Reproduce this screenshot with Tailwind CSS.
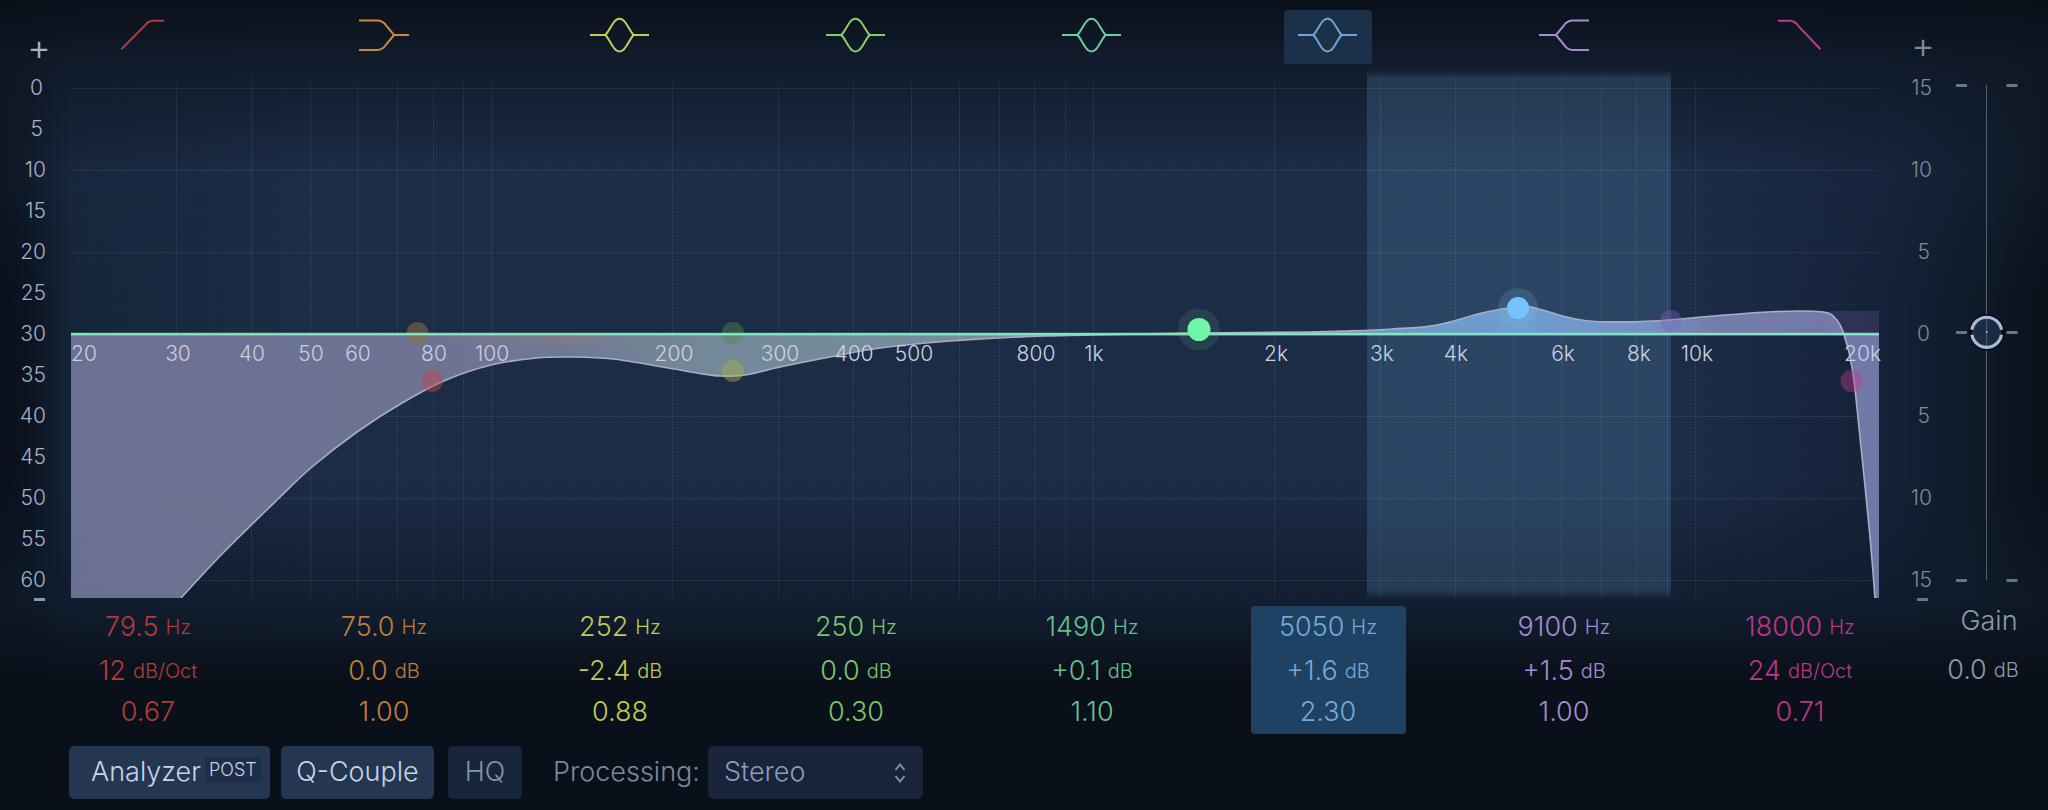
<!DOCTYPE html>
<html lang="en">
<head>
  <meta charset="UTF-8" />
  <title>Channel EQ</title>
  <script src="https://cdn.jsdelivr.net/npm/@tailwindcss/browser@4"></script>
</head>
<body class="bg-[#0a1019]">
  <div class="relative w-[2048px] h-[810px] overflow-hidden font-['Inter',sans-serif] bg-[linear-gradient(180deg,#0a1019f8_0,#0f1827d8_60px,#1c2d4740_170px,#1c2d4700_300px,#1c2d4700_480px,#0f1a2ab8_600px,#0a1019_680px),linear-gradient(90deg,#0a1019_0,#0c1421_30px,#16263c_75px,#1c2d47_300px,#1c2d47_1700px,#15233a_1880px,#0e1826_1990px,#0a1019_2048px)]">

    <!-- band type icons -->
    <div class="relative h-[67px]">
      <span class="absolute left-[19px] top-[25px] w-[40px] text-center text-[36px] leading-[44px] font-light text-[#a3b2c8]">+</span>
      <span class="absolute left-[1903px] top-[23px] w-[40px] text-center text-[36px] leading-[44px] font-light text-[#7f8b9b]">+</span>
      <div class="ml-[30px] w-[1888px] grid grid-cols-8">
        <div class="h-[67px] flex justify-center pt-[15px]">
          <svg class="w-[64px] h-[40px]" viewBox="0 0 64 40" fill="none" stroke="#b03c3e" stroke-width="2"><path d="M5.4 34.3 L27.8 11.7 Q32 5.7 37 5.7 H48" /></svg>
        </div>
        <div class="h-[67px] flex justify-center pt-[15px]">
          <svg class="w-[64px] h-[40px]" viewBox="0 0 64 40" fill="none" stroke="#c98a3c" stroke-width="2"><path d="M7 5.5 H25 Q31 5.5 34.5 11 L42 20 H57 M42 20 L34.5 29 Q31 35 25 35 H7" /></svg>
        </div>
        <div class="h-[67px] flex justify-center pt-[15px]">
          <svg class="w-[64px] h-[40px]" viewBox="0 0 64 40" fill="none" stroke="#c5cf56" stroke-width="2"><path d="M2 20 H17.5 C21 16 23 11 26 7 C29 2.5 34 2.5 37 7 C40 11 42 16 45.5 20 H61 M45.5 20 C42 24 40 29 37 33 C34 37.5 29 37.5 26 33 C23 29 21 24 17.5 20" /></svg>
        </div>
        <div class="h-[67px] flex justify-center pt-[15px]">
          <svg class="w-[64px] h-[40px]" viewBox="0 0 64 40" fill="none" stroke="#86cf68" stroke-width="2"><path d="M2 20 H17.5 C21 16 23 11 26 7 C29 2.5 34 2.5 37 7 C40 11 42 16 45.5 20 H61 M45.5 20 C42 24 40 29 37 33 C34 37.5 29 37.5 26 33 C23 29 21 24 17.5 20" /></svg>
        </div>
        <div class="h-[67px] flex justify-center pt-[15px]">
          <svg class="w-[64px] h-[40px]" viewBox="0 0 64 40" fill="none" stroke="#68cf9e" stroke-width="2"><path d="M2 20 H17.5 C21 16 23 11 26 7 C29 2.5 34 2.5 37 7 C40 11 42 16 45.5 20 H61 M45.5 20 C42 24 40 29 37 33 C34 37.5 29 37.5 26 33 C23 29 21 24 17.5 20" /></svg>
        </div>
        <div class="h-[67px] flex justify-center pt-[10px]">
          <div class="w-[88px] h-[54px] rounded-[4px] bg-[#1b3049] flex justify-center pt-[5px]">
            <svg class="w-[64px] h-[40px]" viewBox="0 0 64 40" fill="none" stroke="#6fa5da" stroke-width="2"><path d="M2 20 H17.5 C21 16 23 11 26 7 C29 2.5 34 2.5 37 7 C40 11 42 16 45.5 20 H61 M45.5 20 C42 24 40 29 37 33 C34 37.5 29 37.5 26 33 C23 29 21 24 17.5 20" /></svg>
          </div>
        </div>
        <div class="h-[67px] flex justify-center pt-[15px]">
          <svg class="w-[64px] h-[40px]" viewBox="0 0 64 40" fill="none" stroke="#a78dd6" stroke-width="2"><path d="M7 20 H24 L31.5 11 Q35 5.5 41 5.5 H57 M24 20 L31.5 29 Q35 35 41 35 H57" /></svg>
        </div>
        <div class="h-[67px] flex justify-center pt-[15px]">
          <svg class="w-[64px] h-[40px]" viewBox="0 0 64 40" fill="none" stroke="#c23a8c" stroke-width="2"><path d="M10 5.7 H22 Q27 5.7 31 11.7 L52.4 34.3" /></svg>
        </div>
      </div>
    </div>

    <!-- graph row -->
    <div class="flex h-[531px]">
      <!-- analyzer scale -->
      <div class="relative w-[71px] shrink-0 flex flex-col pr-[25px] text-[21px] font-light text-[#a3b2c7] text-right">
        <div class="h-[41px] shrink-0 flex items-center justify-end pr-[3px]">0</div>
        <div class="h-[41px] shrink-0 flex items-center justify-end pr-[3px]">5</div>
        <div class="h-[41px] shrink-0 flex items-center justify-end">10</div>
        <div class="h-[41px] shrink-0 flex items-center justify-end">15</div>
        <div class="h-[41px] shrink-0 flex items-center justify-end">20</div>
        <div class="h-[41px] shrink-0 flex items-center justify-end">25</div>
        <div class="h-[41px] shrink-0 flex items-center justify-end">30</div>
        <div class="h-[41px] shrink-0 flex items-center justify-end">35</div>
        <div class="h-[41px] shrink-0 flex items-center justify-end">40</div>
        <div class="h-[41px] shrink-0 flex items-center justify-end">45</div>
        <div class="h-[41px] shrink-0 flex items-center justify-end">50</div>
        <div class="h-[41px] shrink-0 flex items-center justify-end">55</div>
        <div class="h-[41px] shrink-0 flex items-center justify-end">60</div>
        <span class="absolute left-[34px] top-[531px] w-[11px] h-[3px] bg-[#8a98ac]"></span>
      </div>

      <!-- curve display -->
      <div class="relative w-[1808px] shrink-0">
        <svg class="absolute inset-0 w-[1808px] h-[531px]" viewBox="71 67 1808 531" fill="none">
          <defs>
            <pattern id="dots" width="3" height="3" patternUnits="userSpaceOnUse"><rect width="1" height="1" fill="#000" fill-opacity=".18" /></pattern>
            <linearGradient id="vfade" gradientUnits="userSpaceOnUse" x1="0" y1="70" x2="0" y2="598">
              <stop offset="0" stop-color="#fff" stop-opacity="0" />
              <stop offset=".05" stop-color="#fff" stop-opacity=".07" />
              <stop offset="1" stop-color="#fff" stop-opacity=".06" />
            </linearGradient>
            <linearGradient id="band" gradientUnits="userSpaceOnUse" x1="0" y1="70" x2="0" y2="600">
              <stop offset="0" stop-color="#6ba6dc" stop-opacity="0" />
              <stop offset=".015" stop-color="#6ba6dc" stop-opacity=".2" />
              <stop offset=".98" stop-color="#6ba6dc" stop-opacity=".2" />
              <stop offset="1" stop-color="#6ba6dc" stop-opacity="0" />
            </linearGradient>
            <linearGradient id="fill" gradientUnits="userSpaceOnUse" x1="71" y1="0" x2="1879" y2="0">
              <stop offset="0" stop-color="#73779a" />
              <stop offset=".205" stop-color="#75789a" />
              <stop offset=".27" stop-color="#77809a" />
              <stop offset=".35" stop-color="#7b909f" />
              <stop offset=".49" stop-color="#7c95a5" />
              <stop offset=".68" stop-color="#7a9bbd" />
              <stop offset=".735" stop-color="#72a0d0" />
              <stop offset=".8" stop-color="#73a6dc" />
              <stop offset=".875" stop-color="#7b97c8" />
              <stop offset=".91" stop-color="#7b83b0" />
              <stop offset="1" stop-color="#7a7fb0" />
            </linearGradient>
            <linearGradient id="zero" gradientUnits="userSpaceOnUse" x1="71" y1="0" x2="1879" y2="0">
              <stop offset="0" stop-color="#7fe6b2" />
              <stop offset=".6" stop-color="#7fe6b8" />
              <stop offset="1" stop-color="#88e2cb" />
            </linearGradient>
            <filter id="soft"><feGaussianBlur stdDeviation="3" /></filter>
            <clipPath id="under"><path id="clipShape" /></clipPath>
          </defs>

          <rect x="71" y="67" width="1808" height="531" fill="url(#dots)" />
          <rect x="1367" y="70" width="304" height="530" fill="url(#band)" />
          <path stroke="url(#vfade)" d="M176.5 70V598M251.5 70V598M310.5 70V598M357.5 70V598M397.5 70V598M433.5 70V598M463.5 70V598M491.5 70V598M672.5 70V598M778.5 70V598M853.5 70V598M911.5 70V598M959.5 70V598M999.5 70V598M1034.5 70V598M1065.5 70V598M1093.5 70V598M1274.5 70V598M1380.5 70V598M1455.5 70V598M1513.5 70V598M1561.5 70V598M1601.5 70V598M1636.5 70V598M1667.5 70V598M1695.5 70V598" />
          <path stroke="#fff" stroke-opacity=".07" d="M71 88.5H1878M71 170.5H1878M71 252.5H1878M71 416.5H1878M71 498.5H1878M71 580.5H1878" />

          <rect x="1830" y="311" width="49" height="23" fill="#4a4270" fill-opacity=".5" />
          <path id="curveFill" fill="url(#fill)" fill-opacity=".92" />
          <g clip-path="url(#under)">
            <path d="M470 376 Q560 340 660 370 L650 380 L470 380Z" fill="#5878ad" fill-opacity=".75" filter="url(#soft)" />
            <path d="M440 334 H640 L570 344 Q500 340 440 336Z" fill="#9a7a7a" fill-opacity=".4" filter="url(#soft)" />
          </g>
          <path id="curveLine" stroke="#a9aec6" stroke-width="1.6" />

          <circle cx="417.5" cy="333" r="11" fill="#8a7040" fill-opacity=".55" />
          <circle cx="432" cy="381" r="11" fill="#c0484d" fill-opacity=".45" />
          <circle cx="733" cy="371" r="11" fill="#a8b04a" fill-opacity=".45" />
          <circle cx="733" cy="333" r="11" fill="#4f8a50" fill-opacity=".45" />
          <circle cx="1671" cy="321" r="11" fill="#8060b8" fill-opacity=".38" />
          <circle cx="1851.5" cy="381" r="11" fill="#c03a90" fill-opacity=".42" />

          <rect x="71" y="332.8" width="1808" height="2.6" fill="url(#zero)" />

          <circle cx="1199" cy="329.5" r="21" fill="#7ad8b0" fill-opacity=".12" />
          <circle cx="1199" cy="329.5" r="11.5" fill="#6ef5a8" />
          <circle cx="1518" cy="308" r="20" fill="#79bfe8" fill-opacity=".18" />
          <circle cx="1518" cy="308" r="11" fill="#75c4ff" />
        </svg>

        <span class="absolute top-[275px] left-0 text-[21px] font-light leading-[24px] text-[#c9cede]">20</span>
        <span class="absolute top-[275px] left-[107px] -translate-x-1/2 text-[21px] font-light leading-[24px] text-[#c9cede]">30</span>
        <span class="absolute top-[275px] left-[181px] -translate-x-1/2 text-[21px] font-light leading-[24px] text-[#c9cede]">40</span>
        <span class="absolute top-[275px] left-[240px] -translate-x-1/2 text-[21px] font-light leading-[24px] text-[#c9cede]">50</span>
        <span class="absolute top-[275px] left-[287px] -translate-x-1/2 text-[21px] font-light leading-[24px] text-[#c9cede]">60</span>
        <span class="absolute top-[275px] left-[363px] -translate-x-1/2 text-[21px] font-light leading-[24px] text-[#c9cede]">80</span>
        <span class="absolute top-[275px] left-[421px] -translate-x-1/2 text-[21px] font-light leading-[24px] text-[#c9cede]">100</span>
        <span class="absolute top-[275px] left-[603px] -translate-x-1/2 text-[21px] font-light leading-[24px] text-[#c9d3e0]">200</span>
        <span class="absolute top-[275px] left-[709px] -translate-x-1/2 text-[21px] font-light leading-[24px] text-[#c9d3e0]">300</span>
        <span class="absolute top-[275px] left-[783px] -translate-x-1/2 text-[21px] font-light leading-[24px] text-[#c9d3e0]">400</span>
        <span class="absolute top-[275px] left-[843px] -translate-x-1/2 text-[21px] font-light leading-[24px] text-[#c9d3e0]">500</span>
        <span class="absolute top-[275px] left-[965px] -translate-x-1/2 text-[21px] font-light leading-[24px] text-[#c9d3e0]">800</span>
        <span class="absolute top-[275px] left-[1023px] -translate-x-1/2 text-[21px] font-light leading-[24px] text-[#c9d3e0]">1k</span>
        <span class="absolute top-[275px] left-[1205px] -translate-x-1/2 text-[21px] font-light leading-[24px] text-[#c9d3e0]">2k</span>
        <span class="absolute top-[275px] left-[1311px] -translate-x-1/2 text-[21px] font-light leading-[24px] text-[#c9d3e0]">3k</span>
        <span class="absolute top-[275px] left-[1385px] -translate-x-1/2 text-[21px] font-light leading-[24px] text-[#c9d3e0]">4k</span>
        <span class="absolute top-[275px] left-[1492px] -translate-x-1/2 text-[21px] font-light leading-[24px] text-[#c9d3e0]">6k</span>
        <span class="absolute top-[275px] left-[1568px] -translate-x-1/2 text-[21px] font-light leading-[24px] text-[#c9d3e0]">8k</span>
        <span class="absolute top-[275px] left-[1626px] -translate-x-1/2 text-[21px] font-light leading-[24px] text-[#c9d3e0]">10k</span>
        <span class="absolute top-[275px] right-[-2px] text-[21px] font-light leading-[24px] text-[#c9cede]">20k</span>
      </div>

      <!-- gain scale -->
      <div class="relative w-[55px] shrink-0 flex flex-col pr-[2px] text-[21px] font-light text-[#7e8a98] text-right">
        <div class="h-[41px] shrink-0 flex items-center justify-end">15</div>
        <div class="h-[41px] shrink-0"></div>
        <div class="h-[41px] shrink-0 flex items-center justify-end">10</div>
        <div class="h-[41px] shrink-0"></div>
        <div class="h-[41px] shrink-0 flex items-center justify-end pr-[2px]">5</div>
        <div class="h-[41px] shrink-0"></div>
        <div class="h-[41px] shrink-0 flex items-center justify-end pr-[2px]">0</div>
        <div class="h-[41px] shrink-0"></div>
        <div class="h-[41px] shrink-0 flex items-center justify-end pr-[2px]">5</div>
        <div class="h-[41px] shrink-0"></div>
        <div class="h-[41px] shrink-0 flex items-center justify-end">10</div>
        <div class="h-[41px] shrink-0"></div>
        <div class="h-[41px] shrink-0 flex items-center justify-end">15</div>
        <span class="absolute left-[38px] top-[531px] w-[11px] h-[3px] bg-[#6a7582]"></span>
      </div>

      <!-- gain slider -->
      <svg class="w-[114px] h-[531px] shrink-0" viewBox="1934 67 114 531" fill="none">
        <path d="M1986.5 85V580" stroke="#556170" />
        <path d="M1956 85.5H1967M2006.5 85.5H2017.5M1956 332.5H1967M2006.5 332.5H2017.5M1956 580.5H1967M2006.5 580.5H2017.5" stroke="#6a7582" stroke-width="3" />
        <circle cx="1986.7" cy="332.3" r="18" fill="#05090f" />
        <circle cx="1986.7" cy="332.3" r="15" fill="#1b2b42" />
        <path d="M1986.7 318V347" stroke="#556170" />
        <path d="M1971.9 329.8 A15 15 0 0 1 2001.5 329.8 M1971.9 334.8 A15 15 0 0 0 2001.5 334.8" stroke="#a3bbdc" stroke-width="3.2" />
        <rect x="1986" y="331.5" width="1.5" height="1.5" fill="#c4d4ea" />
      </svg>
    </div>

    <!-- band parameters -->
    <div class="flex h-[136px] pt-[8px]">
      <div class="ml-[30px] w-[1888px] grid grid-cols-8 text-[27px] font-light">
        <div class="flex justify-center text-[#b5393a]">
          <div class="w-[155px] h-[128px] flex flex-col items-center">
            <div class="h-[42px] flex items-center gap-[7px]"><span>79.5</span><span class="text-[20px]">Hz</span></div>
            <div class="h-[46px] flex items-center gap-[7px]"><span>12</span><span class="text-[20px]">dB/Oct</span></div>
            <div class="h-[36px] flex items-center"><span>0.67</span></div>
          </div>
        </div>
        <div class="flex justify-center text-[#bf7f36]">
          <div class="w-[155px] h-[128px] flex flex-col items-center">
            <div class="h-[42px] flex items-center gap-[7px]"><span>75.0</span><span class="text-[20px]">Hz</span></div>
            <div class="h-[46px] flex items-center gap-[7px]"><span>0.0</span><span class="text-[20px]">dB</span></div>
            <div class="h-[36px] flex items-center"><span>1.00</span></div>
          </div>
        </div>
        <div class="flex justify-center text-[#c0ca55]">
          <div class="w-[155px] h-[128px] flex flex-col items-center">
            <div class="h-[42px] flex items-center gap-[7px]"><span>252</span><span class="text-[20px]">Hz</span></div>
            <div class="h-[46px] flex items-center gap-[7px]"><span>-2.4</span><span class="text-[20px]">dB</span></div>
            <div class="h-[36px] flex items-center"><span>0.88</span></div>
          </div>
        </div>
        <div class="flex justify-center text-[#78c56a]">
          <div class="w-[155px] h-[128px] flex flex-col items-center">
            <div class="h-[42px] flex items-center gap-[7px]"><span>250</span><span class="text-[20px]">Hz</span></div>
            <div class="h-[46px] flex items-center gap-[7px]"><span>0.0</span><span class="text-[20px]">dB</span></div>
            <div class="h-[36px] flex items-center"><span>0.30</span></div>
          </div>
        </div>
        <div class="flex justify-center text-[#65c08e]">
          <div class="w-[155px] h-[128px] flex flex-col items-center">
            <div class="h-[42px] flex items-center gap-[7px]"><span>1490</span><span class="text-[20px]">Hz</span></div>
            <div class="h-[46px] flex items-center gap-[7px]"><span>+0.1</span><span class="text-[20px]">dB</span></div>
            <div class="h-[36px] flex items-center"><span>1.10</span></div>
          </div>
        </div>
        <div class="flex justify-center text-[#74a9d8]">
          <div class="w-[155px] h-[128px] flex flex-col items-center rounded-[4px] bg-[#1f4263]">
            <div class="h-[42px] flex items-center gap-[7px]"><span>5050</span><span class="text-[20px]">Hz</span></div>
            <div class="h-[46px] flex items-center gap-[7px]"><span>+1.6</span><span class="text-[20px]">dB</span></div>
            <div class="h-[36px] flex items-center"><span>2.30</span></div>
          </div>
        </div>
        <div class="flex justify-center text-[#a68ad0]">
          <div class="w-[155px] h-[128px] flex flex-col items-center">
            <div class="h-[42px] flex items-center gap-[7px]"><span>9100</span><span class="text-[20px]">Hz</span></div>
            <div class="h-[46px] flex items-center gap-[7px]"><span>+1.5</span><span class="text-[20px]">dB</span></div>
            <div class="h-[36px] flex items-center"><span>1.00</span></div>
          </div>
        </div>
        <div class="flex justify-center text-[#b9378a]">
          <div class="w-[155px] h-[128px] flex flex-col items-center">
            <div class="h-[42px] flex items-center gap-[7px]"><span>18000</span><span class="text-[20px]">Hz</span></div>
            <div class="h-[46px] flex items-center gap-[7px]"><span>24</span><span class="text-[20px]">dB/Oct</span></div>
            <div class="h-[36px] flex items-center"><span>0.71</span></div>
          </div>
        </div>
      </div>
      <div class="w-[130px] flex flex-col items-center text-[#8d9aae] font-light">
        <div class="h-[30px] flex items-center text-[27px] pl-[12px]">Gain</div>
        <div class="h-[48px] mt-[10px] flex items-center gap-[7px] text-[27px]"><span>0.0</span><span class="text-[20px]">dB</span></div>
      </div>
    </div>

    <!-- bottom controls -->
    <div class="flex items-center h-[53px] mt-[12px] pl-[69px] text-[27px] font-light">
      <button class="h-[53px] w-[201px] rounded-[5px] bg-[#243650] text-[#c4d4ea] flex items-center pl-[22px]">Analyzer<span class="ml-[4px] mb-[6px] w-[56px] h-[25px] rounded-[2px] bg-[#1d2e46] text-[18px] leading-[25px] text-center">POST</span></button>
      <button class="h-[53px] w-[153px] ml-[11px] rounded-[5px] bg-[#243650] text-[#c4d4ea]">Q-Couple</button>
      <button class="h-[53px] w-[74px] ml-[14px] rounded-[5px] bg-[#17243a] text-[#8394ad]">HQ</button>
      <span class="ml-[31px] w-[155px] text-[#7e8a9b]">Processing:</span>
      <div class="h-[53px] w-[215px] rounded-[5px] bg-[#17243a] text-[#8d9db5] flex items-center justify-between pl-[16px] pr-[17px]">
        <span>Stereo</span>
        <svg class="w-[12px] h-[22px]" viewBox="0 0 12 22" fill="none" stroke="#8494ad" stroke-width="1.8"><path d="M1.5 8 L6 2.5 L10.5 8 M1.5 14 L6 19.5 L10.5 14" /></svg>
      </div>
    </div>
  </div>

  <script>
    // smooth EQ response through the measured points
    const pts = [[181,598],[223,553],[277,500],[312,467],[357,432],[402,403],[446,380],[491,365],[536,358],[573,357],[613,359],[663,367],[697,373],[720,376],[745,375],[780,367],[830,357],[880,348],[950,341],[1045,336],[1199,333],[1306,332],[1348,331],[1393,329],[1437,325],[1482,313],[1518,306.7],[1535,308],[1571,318],[1598,321.7],[1660,320.7],[1705,316.7],[1772,311.7],[1821,311.7],[1835,318],[1843.5,333],[1852.5,370],[1861,447],[1870,537],[1875,598]];

    function spline(p) {
      let d = `${p[0][0]} ${p[0][1]}`;
      for (let i = 0; i < p.length - 1; i++) {
        const a = p[Math.max(i - 1, 0)], b = p[i], c = p[i + 1], e = p[Math.min(i + 2, p.length - 1)];
        const c1 = [b[0] + (c[0] - a[0]) / 6, b[1] + (c[1] - a[1]) / 6];
        const c2 = [c[0] - (e[0] - b[0]) / 6, c[1] - (e[1] - b[1]) / 6];
        d += ` C${c1[0]} ${c1[1]} ${c2[0]} ${c2[1]} ${c[0]} ${c[1]}`;
      }
      return d;
    }

    const line = spline(pts);
    const shape = `M71 334 V598 H181 L${line} H1879 V334 Z`;
    document.getElementById('curveLine').setAttribute('d', 'M' + line);
    document.getElementById('curveFill').setAttribute('d', shape);
    document.getElementById('clipShape').setAttribute('d', shape);
  </script>
</body>
</html>
